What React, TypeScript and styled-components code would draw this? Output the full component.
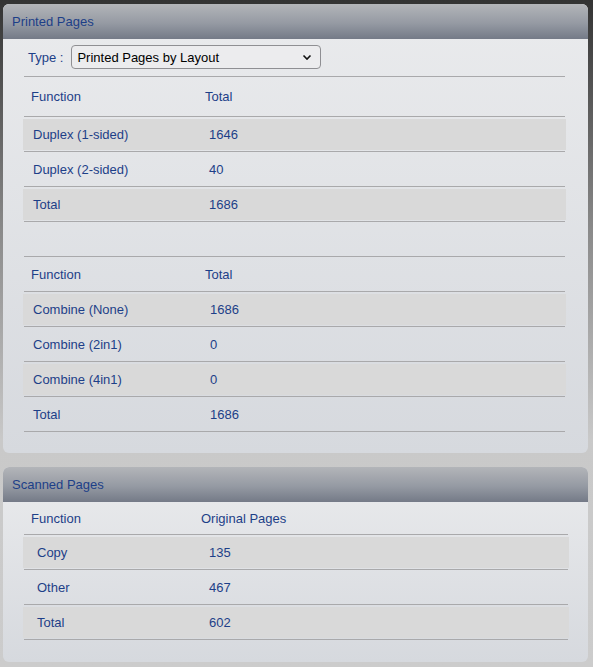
import React from "react";
import styled, { createGlobalStyle } from "styled-components";

const Global = createGlobalStyle`
  html, body { margin: 0; padding: 0; }
  body {
    min-height: 667px;
    background: linear-gradient(to bottom, #333333 0px, #8a8a8a 230px, #c9c9c9 440px, #cccccc 667px);
    font-family: "Liberation Sans", Arial, sans-serif;
    font-size: 13px;
  }
`;

const Page = styled.div`
  padding: 4px 5px 5px 3px;
  display: flex;
  flex-direction: column;
  gap: 14px;
`;

const Panel = styled.section`
  border-radius: 6px;
  background: linear-gradient(to bottom, #eaebed 0%, #d6d9de 100%);
  overflow: hidden;
`;

const PanelHeader = styled.header`
  height: 35px;
  display: flex;
  align-items: center;
  padding-left: 9px;
  background: linear-gradient(to bottom, #b3b5b9 0%, #959aa3 55%, #747a87 100%);
  color: #1d3f88;
  font-size: 13px;
`;

const PanelBody = styled.div<{ $right: number; $bottom: number }>`
  padding: 0 ${(p) => p.$right}px ${(p) => p.$bottom}px 20px;
`;

const SelectRow = styled.div`
  height: 37px;
  display: flex;
  align-items: center;
  gap: 8px;
  padding-left: 4px;
  margin-left: 1px;
  border-bottom: 1px solid #a9a9ab;
  color: #1d3f88;
`;

const SelectWrap = styled.div`
  position: relative;
  display: flex;
  margin-top: -1px;
`;

const Select = styled.select`
  appearance: none;
  -webkit-appearance: none;
  width: 250px;
  height: 24px;
  border: 1px solid #8f8f93;
  border-radius: 4px;
  background: #ececee;
  font-family: "Liberation Sans", Arial, sans-serif;
  font-size: 13px;
  color: #000;
  padding: 0 0 0 5px;
  outline: none;
`;

const Chevron = styled.svg`
  position: absolute;
  right: 9px;
  top: 9px;
  pointer-events: none;
`;

const HeadRow = styled.div<{ $h: number; $col: number; $top?: boolean }>`
  height: ${(p) => p.$h}px;
  display: grid;
  grid-template-columns: ${(p) => p.$col}px 1fr;
  align-items: center;
  padding-left: 7px;
  margin-left: 1px;
  border-top: ${(p) => (p.$top ? "1px solid #a9a9ab" : "none")};
  border-bottom: 1px solid #a9a9ab;
  color: #1d3f88;
`;

const Row = styled.div`
  padding: 2px 0 1px;
  margin-left: 1px;
  border-bottom: 1px solid #a9a9ab;
`;

const Cells = styled.div<{ $shaded: boolean; $indent: number; $col: number }>`
  height: 31px;
  margin: 0 -1px;
  display: grid;
  grid-template-columns: ${(p) => p.$col}px 1fr;
  align-items: center;
  padding-left: ${(p) => p.$indent}px;
  background: ${(p) => (p.$shaded ? "#d9d9d9" : "transparent")};
  color: #1d3f88;
`;

const Spacer = styled.div`
  height: 34px;
`;

type Item = [string, string];

function DataRows({ items, indent, col }: { items: Item[]; indent: number; col: number }) {
  return (
    <>
      {items.map(([a, b], i) => (
        <Row key={a}>
          <Cells $shaded={i % 2 === 0} $indent={indent} $col={col}>
            <span>{a}</span>
            <span>{b}</span>
          </Cells>
        </Row>
      ))}
    </>
  );
}

export default function App() {
  return (
    <>
      <Global />
      <Page>
        <Panel>
          <PanelHeader>Printed Pages</PanelHeader>
          <PanelBody $right={23} $bottom={21}>
            <SelectRow>
              <span>Type :</span>
              <SelectWrap>
                <Select defaultValue="layout">
                  <option value="layout">Printed Pages by Layout</option>
                  <option value="function">Printed Pages by Function</option>
                </Select>
                <Chevron width="10" height="7" viewBox="0 0 10 7">
                  <polyline points="1.5,1.5 5,5 8.5,1.5" fill="none" stroke="#111" strokeWidth="1.6" />
                </Chevron>
              </SelectWrap>
            </SelectRow>
            <HeadRow $h={39} $col={174}>
              <span>Function</span>
              <span>Total</span>
            </HeadRow>
            <DataRows
              indent={10}
              col={176}
              items={[
                ["Duplex (1-sided)", "1646"],
                ["Duplex (2-sided)", "40"],
                ["Total", "1686"],
              ]}
            />
            <Spacer />
            <HeadRow $h={34} $col={174} $top>
              <span>Function</span>
              <span>Total</span>
            </HeadRow>
            <DataRows
              indent={10}
              col={177}
              items={[
                ["Combine (None)", "1686"],
                ["Combine (2in1)", "0"],
                ["Combine (4in1)", "0"],
                ["Total", "1686"],
              ]}
            />
          </PanelBody>
        </Panel>
        <Panel>
          <PanelHeader>Scanned Pages</PanelHeader>
          <PanelBody $right={20} $bottom={22}>
            <HeadRow $h={32} $col={170}>
              <span>Function</span>
              <span>Original Pages</span>
            </HeadRow>
            <DataRows
              indent={14}
              col={172}
              items={[
                ["Copy", "135"],
                ["Other", "467"],
                ["Total", "602"],
              ]}
            />
          </PanelBody>
        </Panel>
      </Page>
    </>
  );
}
